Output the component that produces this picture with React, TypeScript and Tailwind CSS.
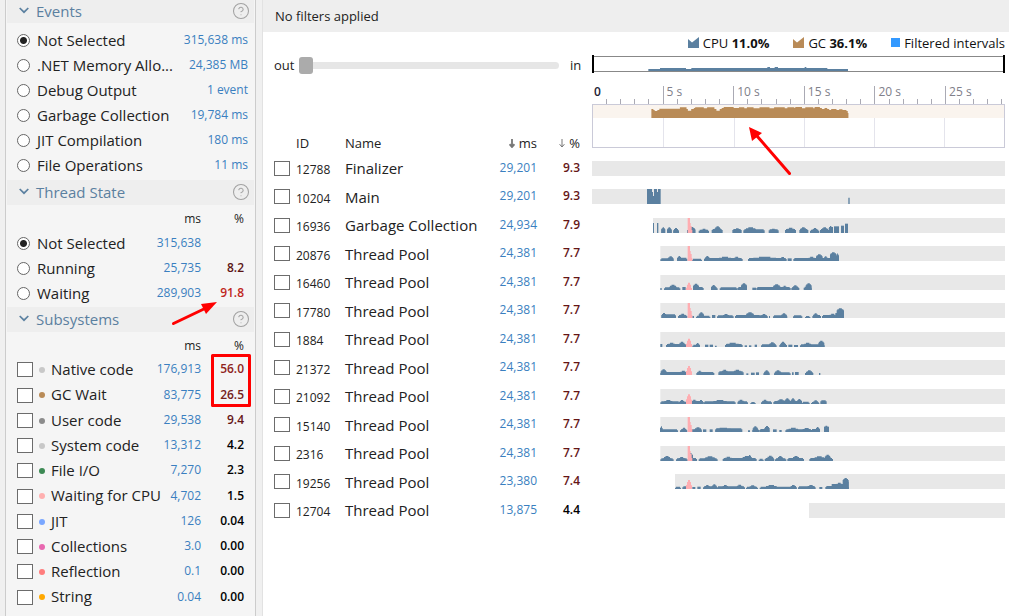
import { CircleHelp } from "lucide-react";

type EventRow = { name: string; value: string; checked?: boolean };
type StateRow = { name: string; ms: string; pct: string; tone: string; checked?: boolean };
type SubsystemRow = { name: string; ms: string; pct: string; tone: string; dot: string };
type ThreadRow = {
  id: string;
  name: string;
  ms: string;
  pct: string;
  tone: string;
  start: number;
  runs: number[][];
  peaks?: number[][];
  wait?: number;
};

const events: EventRow[] = [
  { name: "Not Selected", value: "315,638 ms", checked: true },
  { name: ".NET Memory Allo...", value: "24,385 MB" },
  { name: "Debug Output", value: "1 event" },
  { name: "Garbage Collection", value: "19,784 ms" },
  { name: "JIT Compilation", value: "180 ms" },
  { name: "File Operations", value: "11 ms" },
];

const states: StateRow[] = [
  { name: "Not Selected", ms: "315,638", pct: "", tone: "", checked: true },
  { name: "Running", ms: "25,735", pct: "8.2", tone: "text-[#5c1414]" },
  { name: "Waiting", ms: "289,903", pct: "91.8", tone: "text-[#c0271d]" },
];

const subsystems: SubsystemRow[] = [
  { name: "Native code", ms: "176,913", pct: "56.0", tone: "text-[#8f231b]", dot: "bg-[#c8c8c8]" },
  { name: "GC Wait", ms: "83,775", pct: "26.5", tone: "text-[#74201a]", dot: "bg-[#b98b57]" },
  { name: "User code", ms: "29,538", pct: "9.4", tone: "text-[#651616]", dot: "bg-[#8c8c8c]" },
  { name: "System code", ms: "13,312", pct: "4.2", tone: "text-black", dot: "bg-[#c8c8c8]" },
  { name: "File I/O", ms: "7,270", pct: "2.3", tone: "text-black", dot: "bg-[#3d8a54]" },
  { name: "Waiting for CPU", ms: "4,702", pct: "1.5", tone: "text-black", dot: "bg-[#ffb0b0]" },
  { name: "JIT", ms: "126", pct: "0.04", tone: "text-black", dot: "bg-[#7aa7ff]" },
  { name: "Collections", ms: "3.0", pct: "0.00", tone: "text-black", dot: "bg-[#e868b0]" },
  { name: "Reflection", ms: "0.1", pct: "0.00", tone: "text-black", dot: "bg-[#ff7d7d]" },
  { name: "String", ms: "0.04", pct: "0.00", tone: "text-black", dot: "bg-[#ffa800]" },
];

const dark = "text-[#651616]";

// runs: [from, to, height]; peaks: [centre, half width, height]; wait: height of the pink spike
const threads: ThreadRow[] = [
  { id: "12788", name: "Finalizer", ms: "29,201", pct: "9.3", tone: dark, start: -114, runs: [] },
  {
    id: "10204", name: "Main", ms: "29,201", pct: "9.3", tone: dark, start: -114,
    runs: [[51, 66, 45], [63, 69, 36], [66, 72, 24], [72, 81, 45], [78, 84, 36], [84, 92, 45], [655, 659, 19]],
  },
  {
    id: "16936", name: "Garbage Collection", ms: "24,934", pct: "7.9", tone: dark, start: 69,
    runs: [[69, 72, 30], [81, 85, 30], [94, 105, 13], [111, 125, 13], [130, 147, 10], [171, 196, 12], [206, 237, 10], [245, 278, 12], [307, 335, 12], [340, 404, 11], [416, 446, 11], [465, 498, 12], [508, 535, 12], [540, 568, 10], [570, 597, 12], [597, 609, 18], [612, 627, 20], [633, 642, 22], [645, 654, 28]],
    peaks: [[100, 4, 17], [118, 5, 17], [138, 6, 15], [186, 8, 18], [222, 8, 13], [263, 7, 20], [322, 8, 14], [362, 14, 17], [430, 8, 13], [482, 10, 16], [520, 8, 17], [555, 7, 15], [584, 8, 17], [602, 4, 21]],
    wait: 45,
  },
  {
    id: "20876", name: "Thread Pool", ms: "24,381", pct: "7.7", tone: dark, start: 91,
    runs: [[91, 130, 8], [141, 172, 10], [186, 216, 7], [222, 338, 9], [354, 470, 9], [473, 485, 8], [490, 604, 9], [602, 626, 15]],
    peaks: [[122, 7, 14], [148, 5, 15], [232, 6, 15], [285, 18, 13], [320, 8, 13], [404, 34, 13], [458, 8, 12], [545, 9, 13], [568, 8, 20], [587, 5, 14], [610, 8, 26], [623, 2, 23]],
    wait: 45,
  },
  {
    id: "16460", name: "Thread Pool", ms: "24,381", pct: "7.7", tone: dark, start: 91,
    runs: [[91, 95, 6], [102, 151, 8], [157, 167, 9], [190, 221, 9], [243, 263, 8], [269, 322, 8], [322, 351, 9], [367, 378, 7], [379, 482, 9], [484, 508, 9], [521, 545, 10]],
    peaks: [[129, 9, 16], [198, 7, 19], [251, 6, 15], [342, 7, 20], [440, 9, 17], [464, 6, 13], [496, 7, 14], [536, 7, 20]],
    wait: 22,
  },
  {
    id: "17780", name: "Thread Pool", ms: "24,381", pct: "7.7", tone: dark, start: 91,
    runs: [[95, 138, 11], [144, 172, 9], [187, 192, 6], [198, 241, 7], [246, 256, 9], [261, 311, 8], [315, 391, 9], [384, 413, 8], [417, 420, 6], [429, 472, 8], [489, 517, 8], [525, 541, 6], [547, 573, 9], [576, 620, 9], [616, 642, 15]],
    peaks: [[102, 6, 15], [158, 8, 13], [214, 6, 17], [288, 9, 12], [360, 10, 17], [402, 8, 12], [462, 7, 14], [557, 6, 14], [608, 9, 13], [631, 9, 29]],
    wait: 45,
  },
  {
    id: "1884", name: "Thread Pool", ms: "24,381", pct: "7.7", tone: dark, start: 91,
    runs: [[91, 97, 9], [108, 170, 9], [187, 210, 7], [225, 235, 7], [239, 249, 7], [255, 260, 4], [285, 338, 9], [344, 351, 5], [357, 364, 5], [374, 381, 7], [393, 440, 8], [448, 471, 9], [475, 487, 7], [492, 504, 6], [510, 584, 8]],
    peaks: [[125, 10, 13], [156, 7, 16], [203, 5, 12], [308, 18, 13], [427, 8, 14], [459, 6, 16], [533, 10, 13], [574, 7, 19]],
    wait: 25,
  },
  {
    id: "21372", name: "Thread Pool", ms: "24,381", pct: "7.7", tone: dark, start: 91,
    runs: [[91, 172, 9], [199, 253, 9], [265, 341, 11], [349, 355, 5], [363, 374, 7], [378, 387, 8], [400, 419, 8], [432, 482, 8], [486, 491, 8], [495, 506, 9], [525, 550, 9], [567, 571, 6]],
    peaks: [[101, 7, 17], [160, 9, 13], [209, 6, 13], [284, 8, 16], [322, 10, 16], [410, 6, 14], [444, 8, 14], [538, 8, 14]],
    wait: 27,
  },
  {
    id: "21092", name: "Thread Pool", ms: "24,381", pct: "7.7", tone: dark, start: 91,
    runs: [[91, 149, 8], [149, 172, 7], [180, 220, 9], [221, 317, 8], [323, 354, 8], [361, 377, 6], [393, 426, 8], [430, 515, 9], [516, 539, 7], [543, 568, 6], [571, 590, 11]],
    peaks: [[115, 12, 12], [156, 7, 12], [193, 7, 13], [213, 6, 12], [270, 20, 12], [333, 8, 13], [405, 7, 13], [453, 10, 14], [472, 6, 17], [489, 5, 17], [508, 6, 15], [557, 7, 11]],
    wait: 29,
  },
  {
    id: "15140", name: "Thread Pool", ms: "24,381", pct: "7.7", tone: dark, start: 91,
    runs: [[91, 144, 8], [150, 172, 8], [182, 215, 8], [219, 229, 8], [239, 248, 8], [256, 337, 11], [354, 360, 5], [367, 388, 9], [388, 418, 9], [429, 440, 8], [448, 455, 6], [466, 545, 8], [543, 570, 9], [582, 597, 16]],
    peaks: [[94, 2, 18], [162, 6, 13], [204, 9, 14], [280, 22, 13], [376, 6, 17], [411, 6, 18], [490, 14, 13], [530, 12, 12], [563, 5, 15], [589, 5, 19]],
    wait: 45,
  },
  {
    id: "2316", name: "Thread Pool", ms: "24,381", pct: "7.7", tone: dark, start: 91,
    runs: [[91, 131, 8], [138, 173, 8], [180, 201, 9], [206, 263, 8], [278, 380, 9], [386, 401, 7], [404, 433, 9], [435, 469, 8], [472, 522, 9], [538, 609, 9]],
    peaks: [[111, 9, 15], [155, 9, 12], [182, 5, 24], [240, 14, 14], [295, 10, 13], [351, 13, 15], [359, 4, 18], [421, 8, 16], [451, 7, 15], [498, 9, 15], [568, 14, 14], [593, 7, 19]],
    wait: 45,
  },
  {
    id: "19256", name: "Thread Pool", ms: "23,380", pct: "7.4", tone: dark, start: 135,
    runs: [[135, 153, 7], [157, 186, 8], [187, 196, 6], [202, 212, 7], [219, 260, 8], [261, 345, 8], [348, 384, 7], [389, 500, 7], [504, 557, 8], [568, 577, 6], [586, 656, 9], [605, 640, 15], [639, 656, 22]],
    peaks: [[232, 7, 12], [253, 6, 14], [286, 8, 12], [329, 8, 13], [368, 9, 11], [424, 16, 12], [490, 8, 12], [543, 10, 12], [628, 8, 19], [647, 7, 33]],
    wait: 27,
  },
  { id: "12704", name: "Thread Pool", ms: "13,875", pct: "4.4", tone: "text-black", start: 537, runs: [] },
];

function Activity({ row }: { row: ThreadRow }) {
  return (
    <svg className="block h-[15px] w-full" viewBox="0 0 1239 45" preserveAspectRatio="none" aria-hidden="true">
      <g transform="translate(114 0)">
        <rect x={row.start} y="0" width={1125 - row.start} height="45" fill="#e8e8e8" />
        <g fill="#5b80a0">
          {row.runs.map(([a, b, h]) => (
            <path key={a + "-" + b} d={b - a > 12 && h < 15 ? `M${a} 45V${48 - h}h3V${45 - h}H${b - 3}v3h3V45Z` : `M${a} 45V${45 - h}H${b}V45Z`} />
          ))}
          {(row.peaks ?? []).map(([c, w, h]) => (
            <path key={c} d={`M${c - w - 2} 45V${51 - h}H${c - w}V${48 - h}H${c - w / 2}V${45 - h}H${c + w / 2}v3H${c + w}v3h2V45Z`} />
          ))}
        </g>
        {row.wait === 45 && <path d="M173 45V0h7v15h2v9h3v12h2v9Z" fill="#ffadb1" />}
        {row.wait && row.wait < 45 && (
          <path d={`M168 45V${60 - row.wait}h3V${51 - row.wait}h3V${45 - row.wait}h6v6h3v10h3V45Z`} fill="#ffadb1" />
        )}
      </g>
    </svg>
  );
}

function SectionHeader({ title, first }: { title: string; first?: boolean }) {
  return (
    <div className={first ? "flex h-[23px] items-center bg-[#eeeeee] pl-3 pr-1" : "flex h-[25px] items-center bg-[#eeeeee] pl-3 pr-1"}>
      <button type="button" className="flex flex-1 items-center gap-[7px] pb-[2px] text-left text-[15px] leading-5 text-[#5b80a0]">
        <svg className="h-[8px] w-[10px]" viewBox="0 0 10 8" fill="none" stroke="#5b80a0" strokeWidth="1.7" aria-hidden="true">
          <path d="M0.7 1 5 5.2 9.3 1" />
        </svg>
        {title}
      </button>
      <button type="button" aria-label={"Help: " + title} className="pb-[2px] text-[#a2a2a2]">
        <CircleHelp size={18} strokeWidth={1.4} />
      </button>
    </div>
  );
}

function ColumnNames() {
  return (
    <div className="flex h-5 items-center pr-[10px] text-[12px] text-[#222222]">
      <span className="flex-1 text-right">ms</span>
      <span className="w-[43px] text-right">%</span>
    </div>
  );
}

const radioClass =
  "size-[13px] shrink-0 appearance-none rounded-full border border-[#666666] bg-white checked:bg-[radial-gradient(circle,#222222_0_3px,#ffffff_4px)]";
const checkClass = "h-[15px] w-4 shrink-0 appearance-none border border-[#6c6c6c] bg-white checked:bg-[#5b80a0]";
const nameClass = "flex-1 whitespace-nowrap pb-[2px] text-[15px] leading-5 text-[#222222]";
const valueClass = "pb-px text-[12px] leading-4 text-[#3a7fc0]";
const pctClass = "w-[43px] pb-px text-right text-[12px] font-semibold leading-4 ";

function Sidebar() {
  return (
    <aside className="w-[263px] shrink-0 border-r border-[#e2e2e2] bg-[#f0f0f0] pl-[5px] pr-[6px]">
      <div className="h-full border-x border-[#cccccc] bg-[#f5f5f5] px-px">
        <section>
          <SectionHeader title="Events" first />
          <div className="pb-px pt-[5px]">
            {events.map((e) => (
              <label key={e.name} className="flex h-[25px] items-center pl-[10px] pr-[6px]">
                <input type="radio" name="event" defaultChecked={e.checked} className={radioClass} />
                <span className={nameClass + " pl-[7px]"}>{e.name}</span>
                <span className={valueClass}>{e.value}</span>
              </label>
            ))}
          </div>
        </section>
        <section className="pt-px">
          <SectionHeader title="Thread State" />
          <div className="pb-px pt-1">
            <ColumnNames />
            <div className="pt-[2px]">
              {states.map((s) => (
                <label key={s.name} className="flex h-[25px] items-center pl-[10px] pr-[10px]">
                  <input type="radio" name="state" defaultChecked={s.checked} className={radioClass} />
                  <span className={nameClass + " pl-[7px]"}>{s.name}</span>
                  <span className={valueClass}>{s.ms}</span>
                  <span className={pctClass + s.tone}>{s.pct}</span>
                </label>
              ))}
            </div>
          </div>
        </section>
        <section>
          <SectionHeader title="Subsystems" />
          <div className="pt-1">
            <ColumnNames />
            <div className="pt-px">
              {subsystems.map((s) => (
                <label key={s.name} className="flex h-[25px] items-center pl-[10px] pr-[10px] nth-[4n+2]:h-[26px]">
                  <input type="checkbox" className={checkClass} />
                  <span className={"ml-[6px] size-[6px] shrink-0 rounded-full " + s.dot} />
                  <span className={nameClass + " pl-[6px]"}>{s.name}</span>
                  <span className={valueClass}>{s.ms}</span>
                  <span className={pctClass + s.tone}>{s.pct}</span>
                </label>
              ))}
            </div>
          </div>
        </section>
      </div>
    </aside>
  );
}

function LegendMark({ color }: { color: string }) {
  return (
    <svg className="h-[11px] w-[11px]" viewBox="0 0 11 11" aria-hidden="true">
      <path d="M0 2 4 5.5 11 0V11H0Z" fill={color} />
    </svg>
  );
}

function Legend() {
  return (
    <div className="flex h-[23px] items-center justify-end pb-[2px] text-[13px] leading-5 text-[#111111]">
      <span className="flex items-center gap-1">
        <LegendMark color="#5b80a0" />
        <span>CPU <b className="font-bold">11.0%</b></span>
      </span>
      <span className="ml-6 flex items-center gap-1">
        <LegendMark color="#b98b57" />
        <span>GC <b className="font-bold">36.1%</b></span>
      </span>
      <span className="ml-6 flex items-center gap-1">
        <span className="size-[9px] bg-[#3399ff]" />
        Filtered intervals
      </span>
    </div>
  );
}

function Overview() {
  return (
    <div className="flex h-[18px] flex-1 border-x-2 border-black py-px">
      <svg className="h-full w-full border-y border-[#888888]" viewBox="0 0 1227 42" preserveAspectRatio="none" aria-hidden="true">
        <path
          d="M163 42V36H198V33H276V36H292V33H520V30H528V33H542V30H552V33H632V30H637V33H700V36H762V42Z"
          fill="#5b80a0"
        />
      </svg>
    </div>
  );
}

const marks = ["0", "5 s", "10 s", "15 s", "20 s", "25 s"];

function Ruler() {
  return (
    <div className="font-normal">
      <div className="grid h-[18px] grid-cols-[17.1%_17.1%_17.1%_17.1%_17.1%_1fr] text-left text-[12px] leading-[11px]">
        {marks.map((m, i) => (
          <div key={m} className="flex flex-col justify-between">
            <div
              className={
                i === 0
                  ? "h-[13px] pl-[2px] font-semibold text-[#222233]"
                  : "h-[13px] border-l border-[#aaaab4] pl-[3px] text-[#80808a]"
              }
            >
              {m}
            </div>
            <div className={i === 5 ? "grid h-[5px] grid-cols-[4fr_4fr_4fr_4fr_1fr]" : "grid h-[5px] grid-cols-5"}>
              {Array.from({ length: 5 }, (_, k) => (
                <span key={k} className={i + k > 0 ? "border-l border-[#aaaab4]" : ""} />
              ))}
            </div>
          </div>
        ))}
      </div>
      <div className="border border-[#cacad8]">
        <svg className="block h-[13px] w-full bg-[#faf4ee]" viewBox="0 0 1239 39" preserveAspectRatio="none" aria-hidden="true">
          <path
            d="M176 39V12H182V15H186V18H194V15H200V11H262V7H282V12H286V17H296V12H304V9H308V7H334V10H344V7H366V12H372V17H382V12H388V9H394V6H424V9H440V7H456V10H464V7H484V10H502V7H532V10H546V7H578V10H586V7H606V8H610V6H630V10H640V7H664V10H668V6H684V9H690V12H698V9H706V12H712V15H718V12H734V15H742V13H752V15H764V18H768V24H770V39Z"
            fill="#b98b57"
          />
        </svg>
        <div className="grid h-[29px] grid-cols-[17.1%_17.1%_17.1%_17.1%_17.1%_1fr]">
          {marks.map((m, i) => (
            <span key={m} className={i > 0 ? "border-l border-[#e4e4ec]" : ""} />
          ))}
        </div>
      </div>
    </div>
  );
}

function SortButton({ label, strong }: { label: string; strong?: boolean }) {
  return (
    <button type="button" className="inline-flex items-center gap-1 whitespace-nowrap">
      <svg className="h-[9px] w-[6px]" viewBox="0 0 6 9" fill="none" stroke="#777777" strokeWidth={strong ? 1.8 : 1} aria-hidden="true">
        <path d="M3 0V8M0.6 5.2 3 8 5.4 5.2" />
      </svg>
      {label}
    </button>
  );
}

function Threads() {
  return (
    <table className="w-full table-fixed border-collapse">
      <colgroup>
        <col className="w-[32px]" />
        <col className="w-[49px]" />
        <col className="w-[146px]" />
        <col className="w-[46px]" />
        <col className="w-[55px]" />
        <col />
      </colgroup>
      <thead>
        <tr className="text-[13px] leading-5 text-[#222222]">
          <th className="p-0" aria-label="Select" />
          <th className="p-0 pb-px text-left align-bottom font-normal">ID</th>
          <th className="p-0 pb-px text-left align-bottom font-normal">Name</th>
          <th className="p-0 pb-px text-right align-bottom font-normal"><SortButton label="ms" strong /></th>
          <th className="p-0 pb-px pr-3 text-right align-bottom font-normal"><SortButton label="%" /></th>
          <th className="p-0 pb-[6px]"><Ruler /></th>
        </tr>
      </thead>
      <tbody>
        {threads.map((t) => (
          <tr key={t.id} className="odd:h-[28px] even:h-[29px]">
            <td className="p-0 pl-[10px]">
              <input type="checkbox" id={"thread-" + t.id} className={checkClass + " block"} />
            </td>
            <td className="p-0 pt-1 text-[12px] leading-4 text-[#222222]"><label htmlFor={"thread-" + t.id}>{t.id}</label></td>
            <td className="whitespace-nowrap p-0 text-[15px] leading-5 text-[#222222]">{t.name}</td>
            <td className="p-0 pb-px text-right text-[12px] leading-4 text-[#3a7fc0]">{t.ms}</td>
            <td className={"p-0 pb-px pr-3 text-right text-[12px] font-semibold leading-4 " + t.tone}>{t.pct}</td>
            <td className="p-0"><Activity row={t} /></td>
          </tr>
        ))}
      </tbody>
    </table>
  );
}

function Annotations() {
  return (
    <svg className="pointer-events-none absolute left-0 top-0 h-[420px] w-[820px]" viewBox="0 0 820 420" fill="none" stroke="#ff0000" strokeWidth="3" strokeLinecap="round" aria-hidden="true">
      <path d="M173.500 323.500 206 308" />
      <path d="M217 302 201 304 206 314Z" fill="#ff0000" stroke="none" />
      <path d="M789.500 173.500 757 136" />
      <path d="M749 127 752 141 762 133Z" fill="#ff0000" stroke="none" />
      <rect x="212.500" y="355.500" width="37" height="50" strokeLinejoin="round" />
    </svg>
  );
}

export default function App() {
  return (
    <div className="relative flex min-h-screen bg-white font-['Open_Sans','Noto_Sans',sans-serif]">
      <Sidebar />
      <main className="min-w-0 flex-1">
        <header className="flex h-8 items-center bg-[#eeeeee] pl-3 text-[13px] leading-5 text-[#222222]">No filters applied</header>
        <div className="pl-px pr-1">
          <Legend />
          <div className="flex h-[31px] items-start">
            <div className="flex h-5 w-[328px] items-center pl-[10px] text-[13px] leading-5 text-[#222222]">
              <label htmlFor="zoom" className="w-[25px]">out</label>
              <input
                id="zoom"
                type="range"
                min="0"
                max="100"
                defaultValue="0"
                className="h-[17px] w-[260px] appearance-none bg-transparent [&::-webkit-slider-runnable-track]:h-[7px] [&::-webkit-slider-runnable-track]:rounded-full [&::-webkit-slider-runnable-track]:bg-[#e6e6e6] [&::-webkit-slider-thumb]:-mt-[5px] [&::-webkit-slider-thumb]:h-[17px] [&::-webkit-slider-thumb]:w-[14px] [&::-webkit-slider-thumb]:appearance-none [&::-webkit-slider-thumb]:rounded-[3px] [&::-webkit-slider-thumb]:bg-[#ababab]"
              />
              <span className="pl-[11px]">in</span>
            </div>
            <Overview />
          </div>
          <Threads />
        </div>
      </main>
      <Annotations />
    </div>
  );
}
